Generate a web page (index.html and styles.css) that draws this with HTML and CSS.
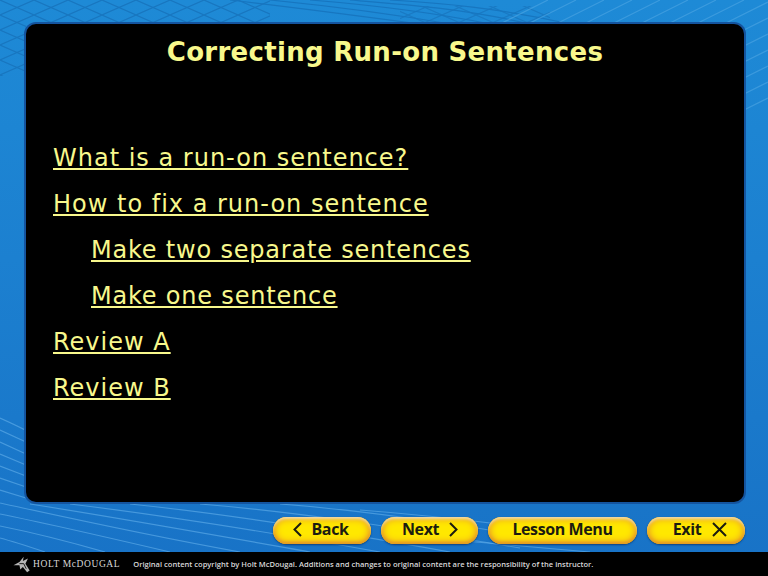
FILE: index.html
```html
<!DOCTYPE html>
<html>
  <head>
    <title>Correcting Run-on Sentences</title>
    <meta name="viewport" content="width=device-width, initial-scale=1" />
    <link rel="stylesheet" href="styles.css">
  </head>
  <body>
    <svg class="waves" width="768" height="552" viewBox="0 0 768 552">
      <defs>
        <pattern id="hatch" width="34" height="15" patternUnits="userSpaceOnUse">
          <path d="M0 0 L34 15 M0 15 L34 0" stroke="#1776c0" stroke-width="1.2" fill="none" />
        </pattern>
      </defs>
      <rect x="0" y="0" width="270" height="26" fill="url(#hatch)" />
      <rect x="0" y="26" width="26" height="50" fill="url(#hatch)" />
      <rect x="400" y="6" width="150" height="20" fill="url(#hatch)" opacity="0.8" />
      <!-- dark fan along the top middle -->
      <g fill="none" stroke="#1776c0" stroke-width="1.2">
        <path d="M230 0 C300 8 360 16 420 24" />
        <path d="M270 0 C330 6 380 12 450 24" />
        <path d="M310 0 C360 4 420 10 490 24" />
        <path d="M350 0 C400 4 460 8 530 24" />
        <path d="M390 0 C440 3 500 8 570 24" />
      </g>
      <!-- light diagonals, top right -->
      <g fill="none" stroke="#5aaee8" stroke-opacity="0.5" stroke-width="1.2">
        <path d="M500 24 L548 0" />
        <path d="M528 24 L576 0" />
        <path d="M556 24 L604 0" />
        <path d="M584 24 L632 0" />
        <path d="M612 24 L660 0" />
        <path d="M640 24 L688 0" />
        <path d="M668 24 L716 0" />
        <path d="M696 24 L744 0" />
        <path d="M724 24 L768 2" />
        <path d="M744 30 L768 18" />
        <path d="M744 46 L768 34" />
        <path d="M744 62 L768 50" />
        <path d="M744 78 L768 66" />
        <path d="M744 94 L768 82" />
        <path d="M744 110 L768 98" />
      </g>
      <!-- light curves along the bottom -->
      <g fill="none" stroke="#6bb6ee" stroke-opacity="0.55" stroke-width="1.2">
        <path d="M0 418 C40 436 60 446 100 504" />
        <path d="M0 430 L26 442" />
        <path d="M0 442 L26 454" />
        <path d="M0 454 L26 465" />
        <path d="M0 466 L26 476" />
        <path d="M0 478 L26 487" />
        <path d="M0 490 L26 498" />
        <path d="M0 503 C60 516 140 534 240 552" />
        <path d="M0 514 C50 524 110 538 170 552" />
        <path d="M0 526 C30 532 70 542 105 552" />
        <path d="M0 538 C15 542 30 547 45 552" />
        <path d="M30 504 C120 518 220 536 310 552" />
        <path d="M70 504 C170 516 290 536 380 552" />
        <path d="M130 504 C230 514 350 534 450 552" />
        <path d="M200 504 C300 512 400 528 520 548" />
        <path d="M280 504 C360 510 440 522 540 538" />
        <path d="M360 510 C440 516 520 526 600 538" />
        <path d="M430 538 C480 542 540 548 590 552" />
      </g>
    </svg>
    <div class="panel">
      <h1 class="title">Correcting Run-on Sentences</h1>
      <ul class="links">
        <li><a href="#">What is a run-on sentence?</a></li>
        <li><a href="#">How to fix a run-on sentence</a></li>
        <li class="sub"><a href="#">Make two separate sentences</a></li>
        <li class="sub"><a href="#">Make one sentence</a></li>
        <li><a href="#">Review A</a></li>
        <li><a href="#">Review B</a></li>
      </ul>
    </div>
    <div class="nav">
      <button class="btn btn-back">
        <svg width="11" height="15" viewBox="0 0 11 15"><path d="M9 1 L2.5 7.5 L9 14" /></svg>
        Back
      </button>
      <button class="btn btn-next">
        Next
        <svg width="11" height="15" viewBox="0 0 11 15"><path d="M2 1 L8.500 7.500 L2 14" /></svg>
      </button>
      <button class="btn btn-menu">Lesson Menu</button>
      <button class="btn btn-exit">
        Exit
        <svg width="15" height="15" viewBox="0 0 15 15"><path d="M1 1 L14 14 M14 1 L1 14" /></svg>
      </button>
    </div>
    <div class="footer">
      <svg class="logo" width="20" height="17" viewBox="0 0 22 20">
        <path d="M1 11 L8 7 L13 1 L12 6 L18 3 L15 9 L20 17 L17 19 L12 13 L9 16 L8 11 Z" fill="#b4b4b4" />
        <path d="M8 9 L13 9 L16 15" fill="none" stroke="#000" stroke-width="1" />
      </svg>
      <span class="brand">HOLT McDOUGAL</span>
      <span class="legal">Original content copyright by Holt McDougal. Additions and changes to original content are the responsibility of the instructor.</span>
    </div>
  </body>
</html>
```

FILE: styles.css
```css
html {
  font-family: "DejaVu Sans", Verdana, sans-serif;
}
body {
  margin: 0;
  width: 768px;
  height: 576px;
  overflow: hidden;
  position: relative;
  display: flex;
  flex-direction: column;
  background: linear-gradient(#1e8ad6, #1c80d0 45%, #1872c6);
}
.waves {
  position: absolute;
  top: 0;
  left: 0;
}
.panel {
  position: relative;
  height: 478px;
  margin: 24px 24px 0 26px;
  box-sizing: border-box;
  padding-top: 13px;
  background-color: #000;
  border-radius: 10px;
  box-shadow: 0 0 0 2px #14549f;
}
.title {
  margin: 0;
  font-size: 26px;
  line-height: 30px;
  font-weight: bold;
  letter-spacing: 0.3px;
  text-align: center;
  color: #f8f88c;
}
.links {
  list-style: none;
  margin: 0;
  padding: 68px 0 0 27px;
}
.links li {
  height: 46px;
  font-size: 24px;
  line-height: 46px;
  letter-spacing: 1px;
}
.links a {
  color: #f8f88c;
}
.links .sub {
  padding-left: 38px;
  letter-spacing: 0.8px;
}
.nav {
  position: relative;
  display: flex;
  justify-content: flex-end;
  gap: 10px;
  margin: 15px 23px 0 0;
  height: 27px;
}
.btn {
  display: flex;
  align-items: center;
  justify-content: center;
  gap: 9px;
  height: 27px;
  padding: 0 0 3px;
  border: 0;
  border-radius: 14px;
  font-family: "Open Sans", sans-serif;
  font-size: 16px;
  font-weight: bold;
  letter-spacing: -0.4px;
  color: #1c1c10;
  background-color: #ffe800;
  box-shadow: inset 0 3px 3px -1px #f2dcae, inset 0 -3px 3px -1px #e39a22, inset 0 0 7px 2px #e8962a, 0 1px 2px #0d3f7c;
}
.btn svg path {
  fill: none;
  stroke: #1c1c10;
  stroke-width: 2;
}
.btn-back {
  width: 98px;
  padding-right: 4px;
}
.btn-next {
  width: 97px;
  padding-left: 2px;
}
.btn-menu {
  width: 149px;
}
.btn-exit {
  width: 98px;
  padding-left: 8px;
  gap: 11px;
}
.footer {
  position: relative;
  display: flex;
  align-items: center;
  height: 24px;
  margin-top: 8px;
  padding-left: 12px;
  background-color: #000;
  color: #d8d8d8;
}
.brand {
  margin-left: 1px;
  font-family: "Liberation Serif", serif;
  font-size: 9.5px;
  letter-spacing: 0.6px;
  white-space: nowrap;
}
.legal {
  margin-left: 13px;
  font-family: "Open Sans", sans-serif;
  font-size: 7.55px;
  font-weight: 600;
  white-space: nowrap;
}
```
